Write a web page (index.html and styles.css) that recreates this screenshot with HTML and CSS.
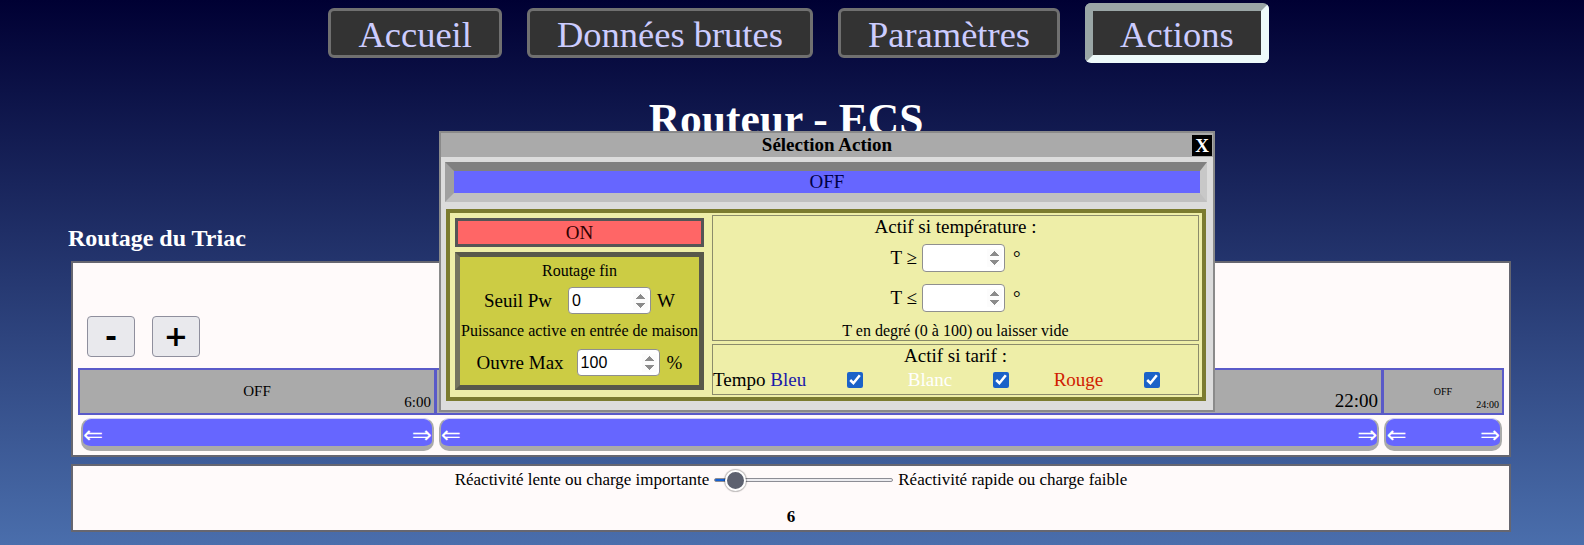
FILE: index.html
```html
<!DOCTYPE html>
<html lang="fr">
<head>
<meta charset="utf-8">
<title>Routeur - ECS</title>
<link rel="stylesheet" href="styles.css">
</head>
<body>
<nav class="menu">
  <a class="tab" href="#">Accueil</a>
  <a class="tab" href="#">Données brutes</a>
  <a class="tab" href="#">Paramètres</a>
  <a class="tab tab-active" href="#">Actions</a>
</nav>
<h1 class="title">Routeur - ECS</h1>
<main class="content">
  <h3 class="section-title">Routage du Triac</h3>
  <div class="panel panel-plan">
    <div class="pm-row">
      <button class="pm-btn" type="button">-</button>
      <button class="pm-btn" type="button">+</button>
    </div>
    <div class="timeline">
      <div class="seg" style="flex:6 1 0;font-size:15px"><span class="seg-label">OFF</span><span class="seg-time">6:00</span></div>
      <div class="seg" style="flex:16 1 0;font-size:19px"><span class="seg-label">OFF</span><span class="seg-time">22:00</span></div>
      <div class="seg" style="flex:2 1 0;font-size:10px"><span class="seg-label">OFF</span><span class="seg-time">24:00</span></div>
    </div>
    <div class="sliders">
      <div class="slot" style="flex:6 1 0"><div class="bar"><span>⇐</span><span>⇒</span></div></div>
      <div class="slot" style="flex:16 1 0"><div class="bar"><span>⇐</span><span>⇒</span></div></div>
      <div class="slot" style="flex:2 1 0"><div class="bar"><span>⇐</span><span>⇒</span></div></div>
    </div>
  </div>
  <div class="panel panel-react">
    <div class="react-row">
      <span>Réactivité lente ou charge importante</span>
      <input type="range" class="react-range" min="0" max="100" value="6">
      <span>Réactivité rapide ou charge faible</span>
    </div>
    <div class="react-value">6</div>
  </div>
</main>

<div class="dialog">
  <div class="dialog-head">Sélection Action<span class="dialog-close">X</span></div>
  <div class="state-off">OFF</div>
  <div class="options">
    <div class="opt-left">
      <div class="state-on">ON</div>
      <div class="fine">
        <div class="fine-title">Routage fin</div>
        <div class="fine-row fine-row-1"><span>Seuil Pw</span><input type="number" class="num num-fine" value="0"><span>W</span></div>
        <div class="fine-note">Puissance active en entrée de maison</div>
        <div class="fine-row fine-row-2"><span>Ouvre Max</span><input type="number" class="num num-fine" value="100"><span>%</span></div>
      </div>
    </div>
    <div class="opt-right">
      <div class="cond cond-temp">
        <div class="cond-title">Actif si température :</div>
        <div class="temp-row temp-row-1"><span>T ≥</span><input type="number" class="num num-temp"><span>°</span></div>
        <div class="temp-row temp-row-2"><span>T ≤</span><input type="number" class="num num-temp"><span>°</span></div>
        <div class="cond-note">T en degré (0 à 100) ou laisser vide</div>
      </div>
      <div class="cond cond-tarif">
        <div class="cond-title">Actif si tarif :</div>
        <div class="tarif-row">
          <span class="tarif-first">Tempo <span class="t-bleu">Bleu</span></span>
          <input type="checkbox" class="chk" checked>
          <span class="t-blanc">Blanc</span>
          <input type="checkbox" class="chk" checked>
          <span class="t-rouge">Rouge</span>
          <input type="checkbox" class="chk" checked>
        </div>
      </div>
    </div>
  </div>
</div>
</body>
</html>
```

FILE: styles.css
```css
html {
  min-height: 100%;
  background-color: #4a6eac;
  background-image: linear-gradient(180deg, #000033 0px, #1f2e66 230px, #4a6eac 545px);
  background-repeat: no-repeat;
}

body {
  margin: 0;
  min-height: 545px;
  position: relative;
  font-family: "Liberation Serif", "Times New Roman", serif;
  color: #000;
}

/* ---------- navigation ---------- */
.menu {
  display: flex;
  justify-content: center;
  align-items: center;
  gap: 25px;
  height: 60px;
  padding: 3px 0 0 13px;
}

.tab {
  display: block;
  box-sizing: border-box;
  height: 50px;
  padding: 2px 27px 0;
  border: 3px solid #707070;
  border-radius: 6px;
  background: #333333;
  color: #ccccff;
  font-size: 36.5px;
  line-height: 44px;
  text-decoration: none;
  white-space: nowrap;
}

.tab-active {
  height: 60px;
  border-width: 8px;
  border-color: #9aa6a6 #eefafa #eefafa #9aa6a6;
}

.title {
  margin: 32px 0 0;
  padding-right: 12px;
  font-size: 43.5px;
  line-height: 48px;
  text-align: center;
  color: #ffffff;
  font-weight: bold;
}

/* ---------- content ---------- */
.content {
  margin: 81px 0 0 68px;
}

.section-title {
  margin: 0 0 9px;
  font-size: 24px;
  line-height: 28px;
  color: #ffffff;
  font-weight: bold;
}

.panel {
  margin-left: 3px;
  width: 1440px;
  box-sizing: border-box;
  border: 2px solid #666670;
  background: #fffafa;
}

.panel-plan {
  height: 196px;
  padding: 53px 5px 0;
}

.pm-row {
  display: flex;
  gap: 17px;
  padding-left: 9px;
}

.pm-btn {
  width: 48px;
  height: 41px;
  padding: 0;
  border: 1px solid #8f8f9d;
  border-radius: 4px;
  background: #e9e9ed;
  color: #000;
  font-family: "DejaVu Sans", sans-serif;
  font-weight: bold;
  font-size: 29px;
  line-height: 1;
}

.timeline {
  display: flex;
  margin-top: 11px;
  height: 47px;
  box-sizing: border-box;
  border: 2px solid #5a5ac8;
  background: #aaaaaa;
}

.seg {
  position: relative;
  min-width: 0;
  display: flex;
  align-items: center;
  justify-content: center;
  border-right: 3px solid #5a5ac8;
}

.seg:last-child {
  border-right: 0;
}

.seg-time {
  position: absolute;
  right: 3px;
  bottom: 3px;
  line-height: 1;
}

.sliders {
  display: flex;
  margin-top: 3px;
  height: 33px;
}

.slot {
  min-width: 0;
  padding: 0 2px 0 3px;
}

.bar {
  height: 33px;
  box-sizing: border-box;
  display: flex;
  justify-content: space-between;
  align-items: center;
  padding: 4px 0 0;
  background: #6666ff;
  border: 2px solid #aaaaaa;
  border-top: 1px solid #d0d0f0;
  border-bottom-width: 5px;
  border-radius: 10px;
  color: #ffffff;
  font-family: "DejaVu Sans", sans-serif;
  font-size: 24px;
  line-height: 1;
}

.panel-react {
  margin-top: 7px;
  height: 68px;
  padding-top: 3px;
  display: flex;
  flex-direction: column;
  align-items: center;
}

.react-row {
  display: flex;
  align-items: center;
  height: 22px;
  font-size: 17px;
  white-space: nowrap;
}

.react-range {
  -webkit-appearance: none;
  appearance: none;
  width: 179px;
  height: 22px;
  margin: 0 5px;
  background: transparent;
}

.react-range::-webkit-slider-runnable-track {
  height: 4px;
  border: 1px solid #8d8d95;
  border-radius: 4px;
  background: linear-gradient(90deg, #1560d0 0 16px, #ececf0 16px);
}

.react-range::-webkit-slider-thumb {
  -webkit-appearance: none;
  appearance: none;
  box-sizing: border-box;
  width: 21px;
  height: 21px;
  margin-top: -9.5px;
  border-radius: 50%;
  border: 2px solid #ffffff;
  background: #5d6170;
  box-shadow: 0 0 1px 1px rgba(0, 0, 0, 0.25);
}

.react-value {
  margin-top: 16px;
  font-size: 17px;
  line-height: 20px;
  font-weight: bold;
}

/* ---------- dialog ---------- */
.dialog {
  position: absolute;
  left: 439px;
  top: 131px;
  width: 776px;
  height: 281px;
  box-sizing: border-box;
  display: flex;
  flex-direction: column;
  border: 2px solid #8a8a8a;
  background: #dcdcdc;
}

.dialog-head {
  position: relative;
  height: 24px;
  background: #aaaaaa;
  text-align: center;
  font-weight: bold;
  font-size: 19px;
  line-height: 24px;
}

.dialog-close {
  position: absolute;
  right: 1px;
  top: 2px;
  width: 20px;
  height: 21px;
  background: #000000;
  color: #ffffff;
  font-size: 19px;
  line-height: 21px;
  text-align: center;
  font-weight: bold;
}

.state-off {
  margin: 5px 6px 0 4px;
  border-style: solid;
  border-width: 9px 7px 9px 9px;
  border-color: #808080 #c8c8c8 #c0c0c0 #a0a0a0;
  background: #6666ff;
  color: #000044;
  text-align: center;
  font-size: 19px;
  line-height: 22px;
}

.options {
  margin: 7px 7px 0 5px;
  height: 192px;
  box-sizing: border-box;
  display: grid;
  grid-template-columns: 249px 1fr;
  column-gap: 8px;
  padding: 2px 3px 2px 5px;
  border: 4px solid #7b7b30;
  background: #eeeea8;
}

.opt-left {
  padding-top: 3px;
  display: flex;
  flex-direction: column;
  gap: 5px;
}

.state-on {
  border: 3px solid #555555;
  background: #ff6666;
  color: #300000;
  text-align: center;
  font-size: 19px;
  line-height: 23px;
}

.fine {
  height: 138px;
  box-sizing: border-box;
  display: flex;
  flex-direction: column;
  align-items: center;
  border: 5px solid #58584a;
  border-left-color: #74745f;
  background: #cccc44;
}

.fine-title {
  margin-top: 5px;
  font-size: 16px;
  line-height: 18px;
}

.fine-row {
  display: flex;
  align-items: center;
  height: 27px;
  font-size: 19px;
  white-space: nowrap;
}

.fine-row-1 {
  margin-top: 7px;
}

.fine-row-2 {
  margin-top: 9px;
}

.fine-note {
  margin-top: 8px;
  font-size: 16px;
  line-height: 18px;
  white-space: nowrap;
}

.num {
  width: 83px;
  box-sizing: border-box;
  padding: 0 2px 0 3px;
  border: 1px solid #8f8f8f;
  border-radius: 4px;
  background: #ffffff;
  color: #000;
  font-family: "Liberation Sans", Arial, sans-serif;
  font-size: 16px;
}

.num::-webkit-inner-spin-button {
  opacity: 1;
}

.num-fine {
  height: 27px;
  margin: 0 7px 0 13px;
}

.fine-row-1 .num-fine {
  margin: 0 6px 0 16px;
}

.opt-right {
  display: flex;
  flex-direction: column;
  gap: 3px;
}

.cond {
  box-sizing: border-box;
  display: flex;
  flex-direction: column;
  align-items: center;
  border: 1px solid #8b8b6b;
  text-align: center;
}

.cond-temp {
  height: 126px;
}

.cond-tarif {
  height: 51px;
}

.cond-title {
  font-size: 19px;
  line-height: 22px;
}

.temp-row {
  display: flex;
  align-items: center;
  height: 28px;
  font-size: 19px;
}

.temp-row-1 {
  margin-top: 6px;
}

.temp-row-2 {
  margin-top: 12px;
}

.num-temp {
  height: 28px;
  margin: 0 8px 0 5px;
}

.cond-note {
  margin-top: 10px;
  font-size: 16px;
  line-height: 18px;
}

.tarif-row {
  align-self: stretch;
  display: grid;
  grid-template-columns: 110px 64px 86px 56px 99px 48px 1fr;
  align-items: center;
  justify-items: center;
  height: 18px;
  margin-top: 4px;
  font-size: 19px;
  line-height: 18px;
}

.tarif-first {
  justify-self: start;
  white-space: nowrap;
}

.t-bleu {
  color: #1a1aaa;
}

.t-blanc {
  color: #ffffff;
}

.t-rouge {
  color: #d02000;
}

.chk {
  width: 16px;
  height: 16px;
  margin: 0;
  accent-color: #1a62c8;
}
```
